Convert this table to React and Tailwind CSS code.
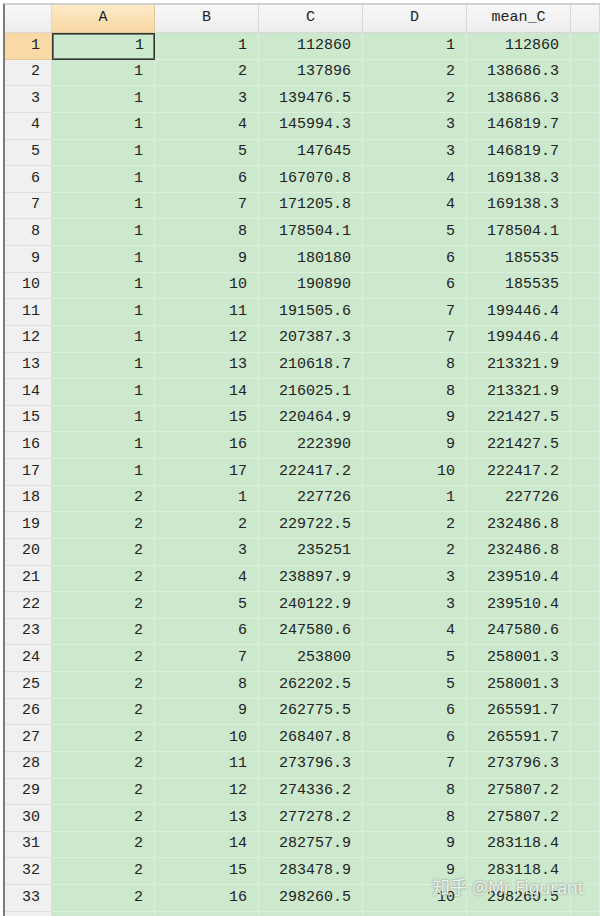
import React from "react";

// rows: A, B, C, D, mean_C
const rows = [
  [1, 1, "112860", 1, "112860"],
  [1, 2, "137896", 2, "138686.3"],
  [1, 3, "139476.5", 2, "138686.3"],
  [1, 4, "145994.3", 3, "146819.7"],
  [1, 5, "147645", 3, "146819.7"],
  [1, 6, "167070.8", 4, "169138.3"],
  [1, 7, "171205.8", 4, "169138.3"],
  [1, 8, "178504.1", 5, "178504.1"],
  [1, 9, "180180", 6, "185535"],
  [1, 10, "190890", 6, "185535"],
  [1, 11, "191505.6", 7, "199446.4"],
  [1, 12, "207387.3", 7, "199446.4"],
  [1, 13, "210618.7", 8, "213321.9"],
  [1, 14, "216025.1", 8, "213321.9"],
  [1, 15, "220464.9", 9, "221427.5"],
  [1, 16, "222390", 9, "221427.5"],
  [1, 17, "222417.2", 10, "222417.2"],
  [2, 1, "227726", 1, "227726"],
  [2, 2, "229722.5", 2, "232486.8"],
  [2, 3, "235251", 2, "232486.8"],
  [2, 4, "238897.9", 3, "239510.4"],
  [2, 5, "240122.9", 3, "239510.4"],
  [2, 6, "247580.6", 4, "247580.6"],
  [2, 7, "253800", 5, "258001.3"],
  [2, 8, "262202.5", 5, "258001.3"],
  [2, 9, "262775.5", 6, "265591.7"],
  [2, 10, "268407.8", 6, "265591.7"],
  [2, 11, "273796.3", 7, "273796.3"],
  [2, 12, "274336.2", 8, "275807.2"],
  [2, 13, "277278.2", 8, "275807.2"],
  [2, 14, "282757.9", 9, "283118.4"],
  [2, 15, "283478.9", 9, "283118.4"],
  [2, 16, "298260.5", 10, "298260.5"],
  ["", "", "", "", ""],
];

const headers = ["A", "B", "C", "D", "mean_C", ""];

const gridCols = "grid grid-cols-[47px_103px_104px_104px_104px_104px_1fr]";

const HeaderRow = () => (
  <div className={`${gridCols} h-[28px]`}>
    <div className="bg-gradient-to-b from-[#f8f8f8] to-[#ededed] border-r border-b border-[#d8d8d8]" />
    {headers.map((h, i) => (
      <div
        key={i}
        className={
          i === 0
            ? "flex items-center justify-center bg-gradient-to-b from-[#fdebc8] to-[#f8d7a3] border-r border-b border-[#e3c89a] text-[#222]"
            : "flex items-center justify-center bg-gradient-to-b from-[#f8f8f8] to-[#ededed] border-r border-b border-[#d8d8d8] text-[#222]"
        }
      >
        {h}
      </div>
    ))}
  </div>
);

const DataRow = ({ row, idx }) => {
  const num = idx + 1;
  // the last row is only a sliver at the bottom edge, no label shown
  const label = row[0] === "" ? "" : num;
  return (
    <div className={`${gridCols} h-[26.625px]`}>
      <div
        className={
          num === 1
            ? "flex items-center justify-end pr-[11px] bg-[#f9d9a6] border-r border-b border-[#e6c996] text-[#222]"
            : "flex items-center justify-end pr-[11px] bg-[#f0f0f0] border-r border-b border-[#dedede] text-[#222]"
        }
      >
        {label}
      </div>
      {[...row, ""].map((v, i) => (
        <div
          key={i}
          className={
            num === 1 && i === 0
              ? "flex items-center justify-end pr-[11px] bg-[#cce8cd] shadow-[inset_0_0_0_1px_#333,inset_0_0_0_2px_#6b7a6b] text-[#222]"
              : "flex items-center justify-end pr-[11px] bg-[#cce8cd] border-r border-b border-[#dcefdc] text-[#222]"
          }
        >
          {v}
        </div>
      ))}
    </div>
  );
};

export default function App() {
  return (
    <div className="relative w-[600px] h-[916px] overflow-hidden bg-white pt-[3px] pl-[3px] font-['Liberation_Mono',monospace] text-[15px]">
      <div className="h-full border-t-2 border-l-2 border-t-[#d0d0d0] border-l-[#7c7c7c]">
        <HeaderRow />
        {rows.map((row, idx) => (
          <DataRow key={idx} row={row} idx={idx} />
        ))}
      </div>

      {/* watermark */}
      <div className="absolute left-[432px] top-[874px] text-[18px] tracking-[-0.3px] text-white/85 font-['Noto_Sans','Noto_Sans_CJK_SC',sans-serif] [text-shadow:0_0_2px_rgba(0,0,0,0.5)] whitespace-nowrap">
        知乎 @Mr Figurant
      </div>
    </div>
  );
}
